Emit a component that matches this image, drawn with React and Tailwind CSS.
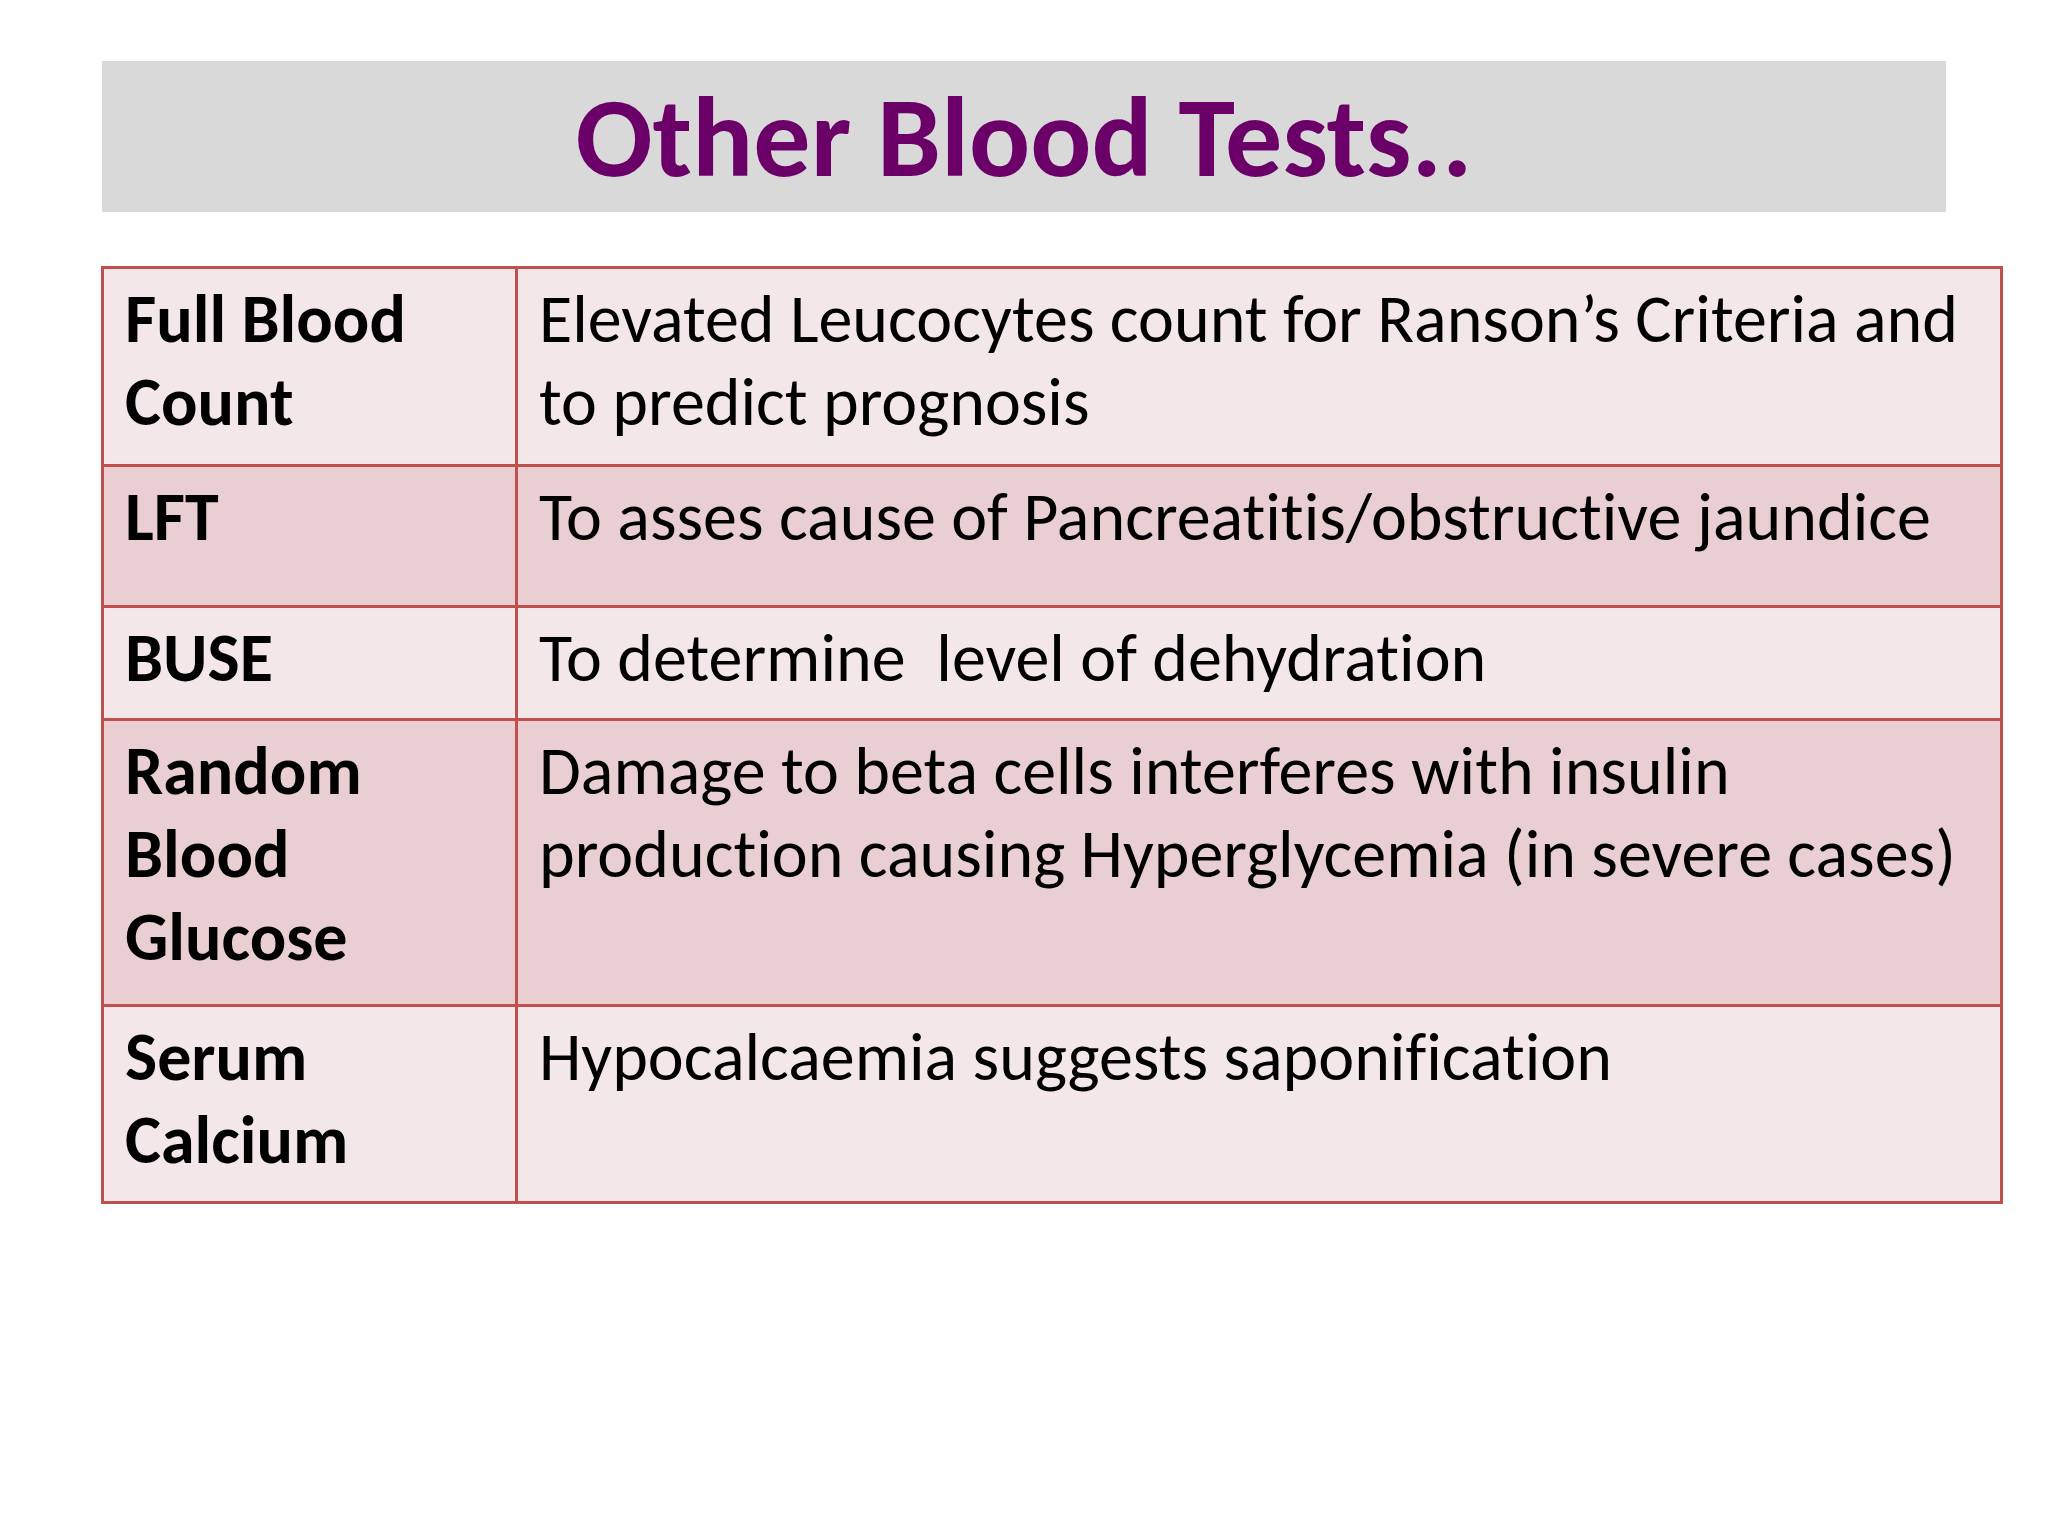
import React from 'react'

const rows = [
  { name: ['Full Blood', 'Count'], text: ['Elevated Leucocytes count for Ranson’s Criteria and', 'to predict prognosis'], h: 'h-[195px]', dark: false },
  { name: ['LFT'], text: ['To asses cause of Pancreatitis/obstructive jaundice'], h: 'h-[141px]', dark: true },
  { name: ['BUSE'], text: ['To determine\u00a0 level of dehydration'], h: 'h-[113px]', dark: false },
  { name: ['Random', 'Blood', 'Glucose'], text: ['Damage to beta cells interferes with insulin', 'production causing Hyperglycemia (in severe cases)'], h: 'h-[286px]', dark: true },
  { name: ['Serum', 'Calcium'], text: ['Hypocalcaemia suggests saponification'], h: 'h-[197px]', dark: false },
]

function Lines({ lines, bold }) {
  return (
    <div className={`whitespace-nowrap text-[68px] leading-[83px] text-black ${bold ? 'font-bold' : 'font-normal'}`}>
      {lines.map((l, i) => (
        <div key={i}>{l}</div>
      ))}
    </div>
  )
}

export default function App() {
  return (
    <div
      className="w-[2048px] h-[1536px] bg-white overflow-hidden [font-variant-ligatures:none]"
      style={{ fontFamily: 'Carlito, Lato, "Open Sans", sans-serif' }}
    >
      <div className="ml-[102px] mt-[61px] w-[1844px] h-[151px] bg-[#d9d9d9] flex items-center justify-center">
        <h1 className="text-[114px] leading-none font-bold text-[#6b0068]">Other Blood Tests..</h1>
      </div>

      <div className="ml-[101px] mt-[54px] w-[1902px] border-[3px] border-[#c0504d]">
        {rows.map((r, i) => (
          <div
            key={i}
            className={`grid grid-cols-[414px_1fr] ${r.h} ${i > 0 ? 'border-t-[3px] border-[#c0504d]' : ''} ${r.dark ? 'bg-[#e9cfd1]' : 'bg-[#f4e7e9]'}`}
          >
            <div className="border-r-[3px] border-[#c0504d] pl-[21px] pt-[8px]">
              <Lines lines={r.name} bold />
            </div>
            <div className="pl-[21px] pt-[8px]">
              <Lines lines={r.text} />
            </div>
          </div>
        ))}
      </div>
    </div>
  )
}
